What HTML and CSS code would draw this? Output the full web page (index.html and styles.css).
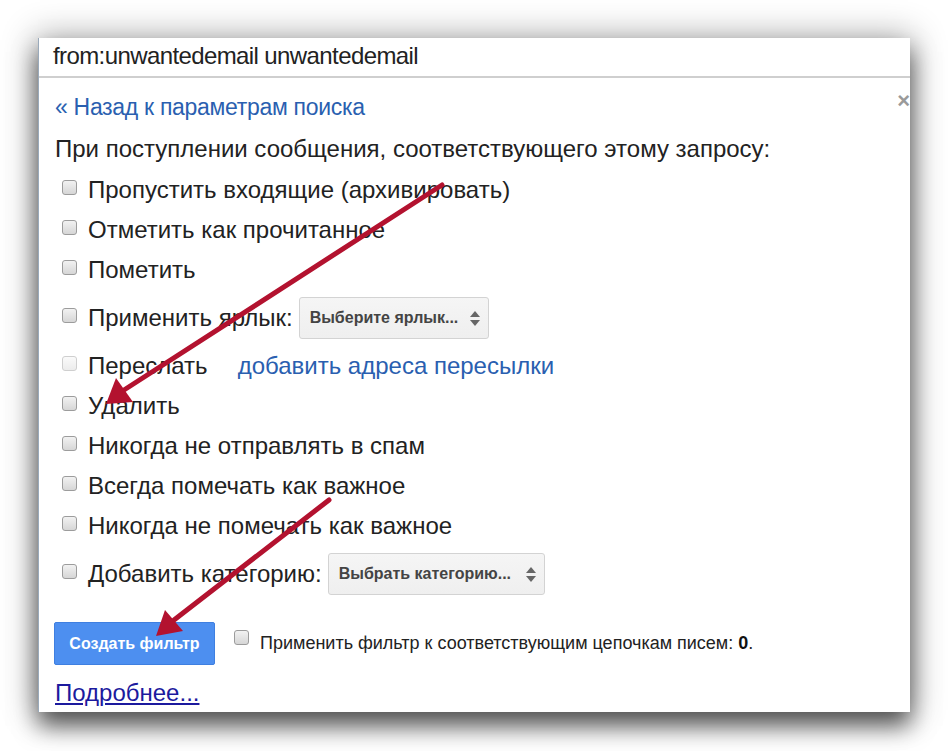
FILE: index.html
```html
<!DOCTYPE html>
<html lang="ru">
<head>
    <meta charset="UTF-8">
    <meta name="viewport" content="width=device-width, initial-scale=1.0">
    <title>filter</title>
    <link rel="stylesheet" href="styles.css">
</head>
<body>
    <div class="filter_box">
        <div class="search_row">from:unwantedemail unwantedemail</div>
        <div class="filter_body">
            <a href="#" class="back_link">« Назад к параметрам поиска</a>
            <span class="btn_close">×</span>
            <p class="intro">При поступлении сообщения, соответствующего этому запросу:</p>
            <ul class="opt_list">
                <li><input type="checkbox" class="chk"><span>Пропустить входящие (архивировать)</span></li>
                <li><input type="checkbox" class="chk"><span>Отметить как прочитанное</span></li>
                <li><input type="checkbox" class="chk"><span>Пометить</span></li>
                <li class="with_select"><input type="checkbox" class="chk"><span>Применить ярлык:</span>
                    <div class="fake_select sel_label">Выберите ярлык...<i class="sel_arrows"></i></div>
                </li>
                <li><input type="checkbox" class="chk" disabled><span>Переслать</span>
                    <a href="#" class="fwd_link">добавить адреса пересылки</a>
                </li>
                <li><input type="checkbox" class="chk"><span>Удалить</span></li>
                <li><input type="checkbox" class="chk"><span>Никогда не отправлять в спам</span></li>
                <li><input type="checkbox" class="chk"><span>Всегда помечать как важное</span></li>
                <li><input type="checkbox" class="chk"><span>Никогда не помечать как важное</span></li>
                <li class="with_select"><input type="checkbox" class="chk"><span>Добавить категорию:</span>
                    <div class="fake_select sel_cat">Выбрать категорию...<i class="sel_arrows"></i></div>
                </li>
            </ul>
            <div class="action_row">
                <button type="button" class="btn_create">Создать фильтр</button>
                <input type="checkbox" class="chk">
                <span class="apply_txt">Применить фильтр к соответствующим цепочкам писем: <b>0</b>.</span>
            </div>
            <a href="#" class="more_link">Подробнее...</a>
        </div>
    </div>

    <!-- red annotation arrows -->
    <svg class="arrows" width="948" height="751" viewBox="0 0 948 751">
        <line x1="442" y1="185" x2="124" y2="390" stroke="#b3122f" stroke-width="5" stroke-linecap="round"/>
        <polygon points="106,404 116,378 133,402" fill="#b3122f"/>
        <line x1="329" y1="500" x2="174" y2="620" stroke="#b3122f" stroke-width="5" stroke-linecap="round"/>
        <polygon points="156,636 165,610 183,631" fill="#b3122f"/>
    </svg>
</body>
</html>
```

FILE: styles.css
```css
*{margin:0;padding:0;box-sizing:border-box;}
html,body{background:#fff;}
body{font-family:Arial,"Liberation Sans",sans-serif;color:#222;width:948px;height:751px;overflow:hidden;position:relative;padding-top:38px;}
a{color:#2a5fb0;text-decoration:none;}
ul{list-style:none;}

.filter_box{margin-left:38px;width:872px;height:674px;background:#fff;border-left:1px solid #9aaabb;box-shadow:0 14px 22px rgba(0,0,0,0.6),0 0 32px 3px rgba(0,0,0,0.3);}
.search_row{height:40px;padding-left:14px;line-height:36px;font-size:24px;color:#222;border-bottom:2px solid #cfcfcf;letter-spacing:-0.6px;}

.filter_body{position:relative;padding:14px 0 0 16px;}
.back_link{display:block;height:30px;line-height:30px;font-size:23px;letter-spacing:-0.3px;color:#2a5fb0;}
.btn_close{position:absolute;right:0;top:12px;font-size:22px;font-weight:bold;color:#9a9a9a;line-height:1;}
.intro{margin-top:12px;height:30px;line-height:30px;font-size:24px;}

.opt_list{margin-top:6px;}
.opt_list > li{display:flex;align-items:center;height:40px;padding-left:7px;font-size:24px;}
.opt_list > li.with_select{height:56px;}
.opt_list > li > span{margin-left:11px;}

.chk{appearance:none;-webkit-appearance:none;display:block;flex:none;width:15px;height:15px;border:1px solid #9c9c9c;border-radius:3px;background:linear-gradient(#f2f2f2,#d6d6d6);margin-top:-6px;}
.chk:disabled{border-color:#cfcfcf;background:linear-gradient(#fafafa,#ececec);}

.fake_select{position:relative;height:42px;margin-left:6px;padding-left:10px;line-height:40px;font-size:16px;font-weight:bold;color:#444;background:linear-gradient(#f5f5f5,#efefef);border:1px solid #d3d3d3;border-radius:3px;}
.sel_label{width:190px;}
.sel_cat{width:217px;margin-left:6px;}
.sel_arrows{position:absolute;right:8px;top:13px;width:10px;height:15px;}
.sel_arrows:before,.sel_arrows:after{content:'';position:absolute;left:0;border-left:5px solid transparent;border-right:5px solid transparent;}
.sel_arrows:before{top:0;border-bottom:6px solid #666;}
.sel_arrows:after{bottom:0;border-top:6px solid #666;}

.fwd_link{margin-left:30px;font-size:24px;color:#2a5fb0;}

.action_row{display:flex;align-items:center;margin-top:20px;margin-left:-1px;}
.btn_create{height:43px;width:161px;background:#4d8ff0;border:1px solid #3f7fe0;border-radius:2px;color:#fff;font-family:Arial,"Liberation Sans",sans-serif;font-size:16px;font-weight:bold;}
.action_row .chk{margin-left:19px;margin-top:-12px;}
.apply_txt{margin-left:11px;font-size:18px;color:#222;}
.apply_txt b{color:#111;}

.more_link{display:inline-block;margin-top:14px;font-size:24px;color:#1c1a9e;text-decoration:underline;}

.arrows{position:absolute;left:0;top:0;pointer-events:none;}
```
